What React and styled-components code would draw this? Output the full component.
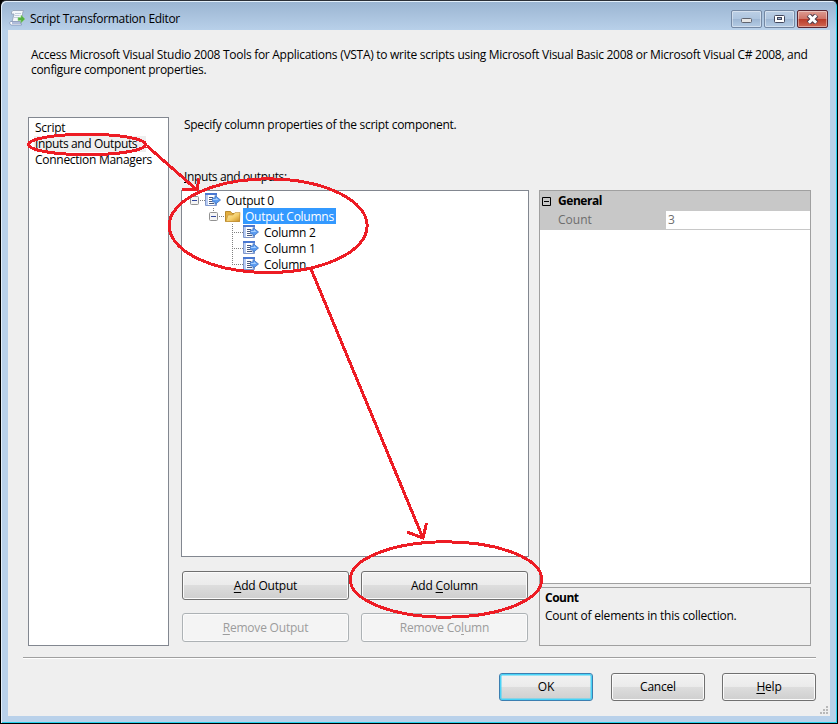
import styled, { createGlobalStyle } from "styled-components";

const GlobalStyle = createGlobalStyle`
  * {
    box-sizing: border-box;
  }

  body {
    margin: 0;
    background: #000;
    color: #000;
    font-family: "Open Sans", "Noto Sans", sans-serif;
    font-size: 12px;
    line-height: 16px;
  }

  svg {
    display: block;
  }
`;

const Window = styled.div`
  position: relative;
  display: flex;
  flex-direction: column;
  width: 838px;
  height: 724px;
  padding: 1px 6px 6px 7px;
  border: 1px solid #000;
  border-top-color: #2b2f36;
  border-radius: 6px 6px 0 0;
  background: linear-gradient(#9ab4d1, #b9d1ea 30px, #b9d1ea);
  box-shadow: inset 1px 1px 0 #e3effa, inset -1px -1px 0 #27d0ec;
  overflow: hidden;
`;

const TitleBar = styled.header`
  display: flex;
  align-items: flex-start;
  height: 28px;
  padding: 8px 3px 0 1px;
`;

const Title = styled.h1`
  flex: 1;
  margin: 1px 0 0 4px;
  font-size: 12px;
  font-weight: 400;
  line-height: 16px;
`;

const Caption = styled.span`
  display: flex;
  align-items: center;
  justify-content: center;
  width: 31px;
  height: 18px;
  margin-left: 2px;
  border: 1px solid ${(props) => (props.$close ? "#5a2430" : "#7488a3")};
  border-radius: 2px;
  background: ${(props) =>
    props.$close
      ? "linear-gradient(#dc9c92, #cf7467 48%, #b93a28 50%, #cf6753)"
      : "linear-gradient(#bccfe5, #aec5df 48%, #9db6d3 50%, #b4cbe4)"};
  box-shadow: inset 0 0 0 1px rgba(255, 255, 255, 0.4);
`;

const Client = styled.main`
  display: flex;
  flex-direction: column;
  width: 822px;
  height: 686px;
  padding: 17px 14px 0 15px;
  background: #efefef;
`;

const Text = styled.span`
  display: block;
  white-space: nowrap;
  letter-spacing: ${(props) => props.$track ?? -0.28}px;
`;

const Description = styled.div`
  height: 70px;
  padding-left: 8px;
  line-height: 15px;
`;

const Columns = styled.div`
  display: flex;
  height: 529px;
  padding-left: 5px;
`;

const PageList = styled.ul`
  width: 141px;
  margin: 0 12px 0 0;
  padding: 2px 5px;
  border: 1px solid #828790;
  background: #fff;
  list-style: none;
`;

const PageItem = styled.li`
  width: ${(props) => (props.$active ? "112px" : "auto")};
  height: 16px;
  padding-left: 1px;
  background: ${(props) => (props.$active ? "#efefef" : "none")};
`;

const Editor = styled.section`
  flex: 1;
`;

const Hint = styled.div`
  height: 52px;
  padding-left: 3px;
`;

const TreeLabel = styled.div`
  height: 21px;
  padding-left: 3px;
`;

const Panes = styled.div`
  display: flex;
  justify-content: space-between;
  width: 630px;
  height: 456px;
`;

const Tree = styled.div`
  width: 348px;
  height: 367px;
  padding: 1px 0 0 8px;
  border: 1px solid #828790;
  background: #fff;
`;

const TreeRow = styled.div`
  display: flex;
  align-items: center;
  height: 16px;
`;

const TreeText = styled.span`
  height: 16px;
  margin-left: 2px;
  padding: 0 2px 0 ${(props) => (props.$selected ? "2px" : "3px")};
  background: ${(props) => (props.$selected ? "#3399ff" : "none")};
  color: ${(props) => (props.$selected ? "#fff" : "#000")};
  line-height: 17px;
  white-space: nowrap;
  letter-spacing: -0.25px;
`;

const ButtonGrid = styled.div`
  display: grid;
  grid-template-columns: 167px 167px;
  grid-auto-rows: 29px;
  gap: 13px 12px;
  padding: 14px 0 0 1px;
`;

const Button = styled.button`
  display: flex;
  align-items: center;
  justify-content: center;
  padding: 1px 0 0;
  border: 1px solid ${(props) => (props.$primary ? "#3c7fb1" : "#707070")};
  border-radius: 3px;
  background: linear-gradient(#f2f2f2, #ebebeb 48%, #dddddd 50%, #cfcfcf);
  box-shadow: inset 0 0 0 ${(props) => (props.$primary ? "1.5px #48d3f7" : "1px #fbfbfb")};
  color: #000;
  font: inherit;
  letter-spacing: -0.2px;

  &:disabled {
    border-color: #adb2b5;
    background: #f4f4f4;
    color: #9c9c9c;
  }

  u {
    text-underline-offset: 2px;
  }
`;

const Properties = styled.div`
  display: flex;
  flex-direction: column;
  gap: 3px;
  width: 272px;
`;

const PropertyGrid = styled.div`
  height: 394px;
  border: 1px solid #a0a0a0;
  background: #fff;
`;

const Category = styled.div`
  display: flex;
  align-items: center;
  gap: 7px;
  height: 20px;
  padding-left: 2px;
  background: #c8c8c8;
  font-weight: 700;
`;

const Property = styled.div`
  display: grid;
  grid-template-columns: 126px 1fr;
  height: 19px;
  border-bottom: 1px solid #c8c8c8;
  color: #6d6d6d;
  line-height: 18px;
`;

const PropertyName = styled.div`
  padding-left: 18px;
  background: #c8c8c8;
`;

const PropertyValue = styled.div`
  padding-left: 2px;
`;

const HelpPane = styled.div`
  height: 59px;
  padding: 1px 5px;
  border: 1px solid #a0a0a0;
  line-height: 18px;
`;

const Footer = styled.footer`
  display: flex;
  justify-content: flex-end;
  height: 44px;
  margin-top: 11px;
  padding-top: 15px;
  border-top: 1px solid #a0a0a0;
  box-shadow: inset 0 1px 0 #fff;

  button {
    width: 94px;
    height: 28px;
    flex: none;
    padding: 0;
  }

  button + button {
    margin-left: 18px;
  }

  button:last-child {
    margin-left: 17px;
  }
`;

const Grip = styled.svg`
  align-self: flex-end;
  margin: 5px -13px 0 0;
`;

const Annotations = styled.svg`
  position: absolute;
  top: -1px;
  left: -1px;
  fill: none;
  stroke: #ed1c24;
  stroke-width: 3;
  shape-rendering: crispEdges;
  pointer-events: none;
`;

const ScriptIcon = () => (
  <svg width="17" height="17" viewBox="0 0 17 17">
    <path d="M4 .5h10.500l-1 3v6l-2 2.500H3l2-8H2.500V2z" fill="#f4f7fb" stroke="#8f9db3" strokeWidth=".8" />
    <path d="M6 3.500h6M5.500 5.500h5M5 7.500h4" stroke="#c3cddc" />
    <path d="M1.500 11.500h10l1 3.500h-10c-2 0-2-3-1-3.500z" fill="#fff" stroke="#7f90b4" strokeWidth=".8" />
    <path d="M3 13h9" stroke="#5f78b5" />
    <path d="M9 7.500h3v-2.500l4 4-4 4v-2.500H9z" fill="#55b142" stroke="#8fce85" strokeWidth=".6" />
  </svg>
);

const ColumnIcon = () => (
  <svg width="16" height="16" viewBox="0 0 16 16">
    <path d="M.5 1.500h11v12H.5z" fill="#fff" stroke="#7f97cc" />
    <path d="M0 1h12v2H0z" fill="#4a78d2" />
    <path d="M1 3h2v10H1z" fill="#b9cdf2" />
    <path d="M4 5.500h4M4 7.500h3M4 9.500h3M4 11.500h5" stroke="#4c5a7c" />
    <path d="M7.500 6h2.500V3.500L15.500 8 10 12.500V10H7.500z" fill="#5c9cf0" stroke="#3f73c4" strokeWidth=".8" />
    <path d="M8 7h3V5.500L13.500 8H8z" fill="#a4ceff" />
  </svg>
);

const FolderIcon = () => (
  <svg width="16" height="16" viewBox="0 0 16 16">
    <defs>
      <linearGradient id="folder" x1="0" y1="0" x2="1" y2="1">
        <stop offset="0" stopColor="#fdf0b4" />
        <stop offset=".55" stopColor="#f3cd6a" />
        <stop offset="1" stopColor="#c98d24" />
      </linearGradient>
    </defs>
    <path d="M.5 13.500V3.500h5l1.500 2h7.500v8z" fill="#e2ae3f" stroke="#b98a2c" />
    <path d="M1 13.500 3 7h5l2-2.500h5l-.5 9z" fill="url(#folder)" stroke="#c2923a" strokeWidth=".6" />
  </svg>
);

// the stem joins a nested node to the icon above it
const Expander = ({ stem }) => (
  <svg width="9" height="16" viewBox="0 0 9 16">
    {stem && <path d="M4.500 0v4" stroke="#808080" strokeDasharray="1 1" />}
    <rect x=".5" y="4.500" width="8" height="8" rx="1" fill="#f4f4f4" stroke="#919191" />
    <path d="M2 8.500h5" stroke="#31479b" />
  </svg>
);

const Dots = ({ width = 6 }) => (
  <svg width={width} height="16">
    <path d={`M1 8.500H${width}`} stroke="#808080" strokeDasharray="1 1" />
  </svg>
);

// dotted guides to the left of a leaf row
const Branch = ({ last }) => (
  <svg width="53" height="16">
    <path
      d={`M42.500 0V${last ? 9 : 16}M42 8.500h11`}
      stroke="#808080"
      strokeDasharray="1 1"
    />
  </svg>
);

const Indent = styled.span`
  width: 19px;
`;

const columns = [
  { name: "Column 2" },
  { name: "Column 1" },
  { name: "Column", last: true },
];

const App = () => {
  return (
    <>
      <GlobalStyle />
      <Window>
        <TitleBar>
          <ScriptIcon />
          <Title>
            <Text $track={-0.31}>Script Transformation Editor</Text>
          </Title>
          <Caption>
            <svg width="11" height="10">
              <rect x=".5" y="4.500" width="10" height="4" rx="1" fill="#e6e6e6" stroke="#60646f" />
            </svg>
          </Caption>
          <Caption>
            <svg width="11" height="8">
              <rect x=".5" y=".5" width="10" height="7" rx="1" fill="#fff" stroke="#42475d" />
              <rect x="3.500" y="2.500" width="4" height="2" fill="#9db6d3" stroke="#42475d" />
            </svg>
          </Caption>
          <Caption $close>
            <svg width="13" height="10" viewBox="0 0 13 10">
              <path d="M2.500 1l8 8M10.500 1l-8 8" stroke="#4c3a48" strokeWidth="5" />
              <path d="M2.800 1.300l7.400 7.400M10.200 1.300l-7.400 7.400" stroke="#fff" strokeWidth="3" />
            </svg>
          </Caption>
        </TitleBar>

        <Client>
          <Description>
            <Text>
              Access Microsoft Visual Studio 2008 Tools for Applications (VSTA) to
              write scripts using Microsoft Visual Basic 2008 or Microsoft Visual C#
              2008, and
            </Text>
            <Text $track={-0.31}>configure component properties.</Text>
          </Description>

          <Columns>
            <PageList>
              <PageItem>
                <Text>Script</Text>
              </PageItem>
              <PageItem $active>
                <Text $track={-0.36}>Inputs and Outputs</Text>
              </PageItem>
              <PageItem>
                <Text>Connection Managers</Text>
              </PageItem>
            </PageList>

            <Editor>
              <Hint>
                <Text>Specify column properties of the script component.</Text>
              </Hint>
              <TreeLabel>
                <Text $track={-0.37}>
                  <u>I</u>nputs and outputs:
                </Text>
              </TreeLabel>
              <Panes>
                <div>
                  <Tree>
                    <TreeRow>
                      <Expander />
                      <Dots />
                      <ColumnIcon />
                      <TreeText>Output 0</TreeText>
                    </TreeRow>
                    <TreeRow>
                      <Indent />
                      <Expander stem />
                      <Dots width={7} />
                      <FolderIcon />
                      <TreeText $selected>Output Columns</TreeText>
                    </TreeRow>
                    {columns.map((column) => (
                      <TreeRow key={column.name}>
                        <Branch last={column.last} />
                        <ColumnIcon />
                        <TreeText>{column.name}</TreeText>
                      </TreeRow>
                    ))}
                  </Tree>
                  <ButtonGrid>
                    <Button>
                      <span><u>A</u>dd Output</span>
                    </Button>
                    <Button>
                      <span>Add <u>C</u>olumn</span>
                    </Button>
                    <Button disabled>
                      <span><u>R</u>emove Output</span>
                    </Button>
                    <Button disabled>
                      <span>Remove Co<u>l</u>umn</span>
                    </Button>
                  </ButtonGrid>
                </div>

                <Properties>
                  <PropertyGrid>
                    <Category>
                      <svg width="9" height="9">
                        <path d="M.5.5h8v8h-8zM2 4.500h5" fill="none" stroke="#000" />
                      </svg>
                      <Text $track={-0.45}>General</Text>
                    </Category>
                    <Property>
                      <PropertyName>Count</PropertyName>
                      <PropertyValue>3</PropertyValue>
                    </Property>
                  </PropertyGrid>
                  <HelpPane>
                    <Text as="b" $track={-0.5}>Count</Text>
                    <Text $track={-0.22}>Count of elements in this collection.</Text>
                  </HelpPane>
                </Properties>
              </Panes>
            </Editor>
          </Columns>

          <Footer>
            <Button $primary>OK</Button>
            <Button>Cancel</Button>
            <Button>
              <span><u>H</u>elp</span>
            </Button>
          </Footer>
          <Grip width="10" height="10">
            <path
              d="M7 1h2M4 4h2M7 4h2M1 7h2M4 7h2M7 7h2"
              stroke="#b8b8b8"
              strokeWidth="2"
            />
          </Grip>
        </Client>

        <Annotations width="838" height="724">
          <ellipse cx="87" cy="144.500" rx="58.700" ry="10.200" />
          <path d="M147 146l50 44M182 189.500h15l2-11" />
          <ellipse cx="268.200" cy="225.700" rx="99" ry="46.800" />
          <path d="M311 269l112 269M407 532l16 6 3.500-15" />
          <ellipse cx="446" cy="579.500" rx="95.700" ry="37.700" />
        </Annotations>
      </Window>
    </>
  );
};

export default App;
